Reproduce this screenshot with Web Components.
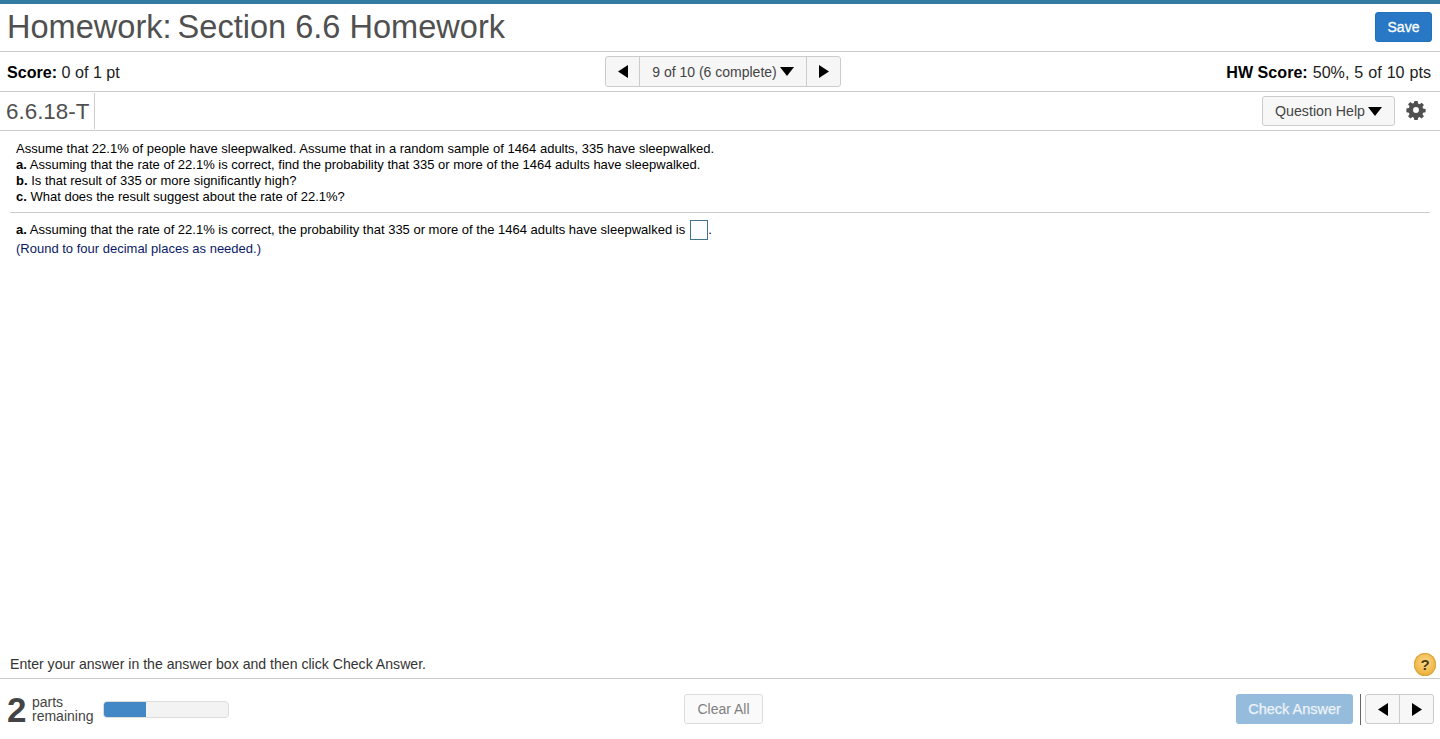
<!DOCTYPE html>
<html><head><meta charset="utf-8">
<style>
html,body{margin:0;height:100%;background:#fff}
body{font-family:"Liberation Sans",Arial,sans-serif;color:#000}
hw-app{height:739px}
</style></head>
<body>
<hw-app>
  <hw-header slot="header"></hw-header>
  <hw-score slot="score"></hw-score>
  <hw-qbar slot="qbar"></hw-qbar>
  <hw-question slot="main"></hw-question>
  <hw-footer slot="footer"></hw-footer>
</hw-app>
<script>
const tri=(d,w=10,h=13)=>{
  const pts={l:`${w},0 ${w},${h} 0,${h/2}`,r:`0,0 0,${h} ${w},${h/2}`,d:`0,0 ${w},0 ${w/2},${h}`}[d];
  return `<svg xmlns="http://www.w3.org/2000/svg" width="${w}" height="${h}" viewBox="0 0 ${w} ${h}" style="display:block"><polygon points="${pts}" fill="#000"/></svg>`;
};
class Base extends HTMLElement{
  constructor(){super();this.attachShadow({mode:'open'}).innerHTML=this.markup();}
}
customElements.define('hw-app',class extends Base{markup(){return `<style>
:host{display:flex;flex-direction:column;border-top:4px solid #337ba2;box-sizing:border-box}
.main{flex:1;display:flex;flex-direction:column;min-height:0}
</style><slot name="header"></slot><slot name="score"></slot><slot name="qbar"></slot>
<div class="main"><slot name="main"></slot></div><slot name="footer"></slot>`}});
customElements.define('hw-header',class extends Base{markup(){return `<style>
:host{display:flex;align-items:center;justify-content:space-between;height:47px;border-bottom:1px solid #ccc;padding:0 8px 0 7px;box-sizing:content-box}
h1{margin:0;font:400 32.55px/1 "Liberation Sans",Arial,sans-serif;color:#505050;white-space:nowrap}
h1 span{margin-right:-3px}
button{font:400 14px/1 "Liberation Sans",Arial,sans-serif;-webkit-text-stroke:.3px #fff;color:#fff;background:#2878c5;border:1px solid #2070ba;border-radius:3px;width:57px;height:30px;padding:0;position:relative;top:-1px}
</style><h1><span>Homework:</span> Section 6.6 Homework</h1><button>Save</button>`}});
customElements.define('hw-score',class extends Base{markup(){return `<style>
:host{display:grid;grid-template-columns:1fr auto 1fr;align-items:center;height:39px;border-bottom:1px solid #ccc;padding:0 9px 0 7px;font-size:16.1px;color:#222}
b{color:#000}
.r{justify-self:end;white-space:nowrap;word-spacing:.5px;padding-top:1px}
.r b{word-spacing:0}
.l{white-space:nowrap;padding-top:1px}
.nav{display:flex;margin-left:8px;border:1px solid #ccc;border-radius:3px;background:#f6f6f6;box-sizing:border-box;height:31px}
.nav div{display:flex;align-items:center;justify-content:center}
.a{width:33px}.m{width:166px;border:solid #ccc;border-width:0 1px;gap:3px;font-size:14px;color:#444;white-space:nowrap}
.b{width:33px}
</style><div class="l"><b>Score:</b> 0 of 1 pt</div>
<div class="nav"><div class="a">${tri('l')}</div><div class="m">9 of 10 (6 complete) ${tri('d',14,9)}</div><div class="b">${tri('r')}</div></div>
<div class="r"><b>HW Score:</b> 50%, 5 of 10 pts</div>`}});
customElements.define('hw-qbar',class extends Base{markup(){return `<style>
:host{display:flex;align-items:stretch;justify-content:space-between;height:38px;border-bottom:1px solid #ccc}
.id{font-size:22.4px;color:#505050;padding:2px 5px 0 6px;margin:1px 0;border-right:1px solid #ccc;display:flex;align-items:center;line-height:1;box-sizing:border-box}
.r{display:flex;align-items:center;gap:11px;padding-right:14px}
.help{display:flex;align-items:center;gap:3px;box-sizing:border-box;width:133px;height:30px;justify-content:center;border:1px solid #ccc;border-radius:3px;background:#f7f7f7;font-size:14.2px;color:#444;white-space:nowrap}
svg.g{position:relative;top:-1px}
</style><div class="id">6.6.18-T</div><div class="r"><div class="help">Question Help ${tri('d',14,9)}</div>
<svg class="g" xmlns="http://www.w3.org/2000/svg" width="20" height="20" viewBox="0 0 20 20"><path fill="#505050" fill-rule="evenodd" d="M8.2 0h3.6l.5 2.8 1.7.7 2.3-1.6 2.5 2.5-1.6 2.3.7 1.7 2.8.5v3.6l-2.8.5-.7 1.7 1.6 2.3-2.5 2.5-2.3-1.6-1.700.7-.5 2.800H8.200l-.5-2.800-1.700-.7-2.300 1.600-2.500-2.500 1.600-2.300-.7-1.700-2.800-.5V8.200l2.800-.5.7-1.700L1.200 3.700l2.500-2.500L6 2.800l1.700-.7zM10 6.700a3.300 3.300 0 1 0 0 6.600 3.300 3.300 0 0 0 0-6.600z" transform="translate(1 1) scale(.9)"/></svg></div>`}});
customElements.define('hw-question',class extends Base{markup(){return `<style>
:host{display:block;padding:10px 10px 0;font-size:13px;line-height:16px;color:#000}
.p{padding:0 6px 7px;border-bottom:1px solid #ccc}
.a{padding:7px 6px 0;display:flex;align-items:center;height:20px;white-space:pre}
.box{display:inline-block;box-sizing:border-box;width:18px;height:20px;border:1px solid #42748f;margin:0 0 0 5px;background:#fbfdfe}
.n{padding:1px 6px 0;color:#0a1a66}
</style><div class="p">Assume that 22.1% of people have sleepwalked. Assume that in a random sample of 1464 adults, 335 have sleepwalked.<br>
<b>a.</b> Assuming that the rate of 22.1% is correct, find the probability that 335 or more of the 1464 adults have sleepwalked.<br>
<b>b.</b> Is that result of 335 or more significantly high?<br>
<b>c.</b> What does the result suggest about the rate of 22.1%?</div>
<div class="a"><span><b>a.</b> Assuming that the rate of 22.1% is correct, the probability that 335 or more of the 1464 adults have sleepwalked is</span><span class="box"></span><span>.</span></div>
<div class="n">(Round to four decimal places as needed.)</div>`}});
customElements.define('hw-footer',class extends Base{markup(){return `<style>
:host{display:block}
.hint{display:flex;align-items:center;justify-content:space-between;height:28px;padding:0 4px 0 10px;border-bottom:1px solid #ccc;font-size:14.1px;color:#333}
.q{width:22px;height:23px;border-radius:50%;background:radial-gradient(circle at 50% 40%,#fbd98a,#eeb23e 70%,#c98f2a);display:flex;align-items:center;justify-content:center;font:700 15px/1 "Liberation Sans",sans-serif;color:#4a3a14;box-shadow:0 0 0 1px #dba63f inset}
.bar{display:grid;grid-template-columns:1fr auto 1fr;align-items:center;height:60px;padding:0 6px 0 7px}
.l{display:flex;align-items:center}
.n{font:700 35px/1 "Liberation Sans",sans-serif;color:#444;width:25px}
.t{font-size:14px;line-height:14px;color:#444}
.pg{margin-left:10px;width:126px;height:17px;box-sizing:border-box;border:1px solid #ddd;border-radius:4px;background:#f3f3f3;overflow:hidden}
.pg i{display:block;width:43px;height:100%;background:#4288c6;margin:-1px;padding:1px 0}
.c{justify-self:center;margin-left:6px;box-sizing:border-box;width:79px;height:30px;border:1px solid #ddd;border-radius:3px;background:#fafafa;color:#808080;font-size:14px;display:flex;align-items:center;justify-content:center}
.r{justify-self:end;display:flex;align-items:center}
.ck{width:117px;height:30px;border-radius:3px;background:#95bcdc;color:#edf3f9;-webkit-text-stroke:.25px #edf3f9;font-size:14.5px;display:flex;align-items:center;justify-content:center}
.sep{width:1px;height:31px;background:#666;margin:0 4px 0 7px}
.nv{display:flex;box-sizing:border-box;height:30px;border:1px solid #ccc;border-radius:3px;background:#f7f7f7}
.nv div{width:33px;display:flex;align-items:center;justify-content:center}
.nv div+div{border-left:1px solid #ccc}
</style><div class="hint"><span>Enter your answer in the answer box and then click Check Answer.</span><span class="q">?</span></div>
<div class="bar"><div class="l"><span class="n">2</span><span class="t">parts<br>remaining</span><div class="pg"><i></i></div></div>
<div class="c">Clear All</div>
<div class="r"><div class="ck">Check Answer</div><span class="sep"></span><div class="nv"><div>${tri('l')}</div><div>${tri('r')}</div></div></div></div>`}});
</script>
</body></html>
